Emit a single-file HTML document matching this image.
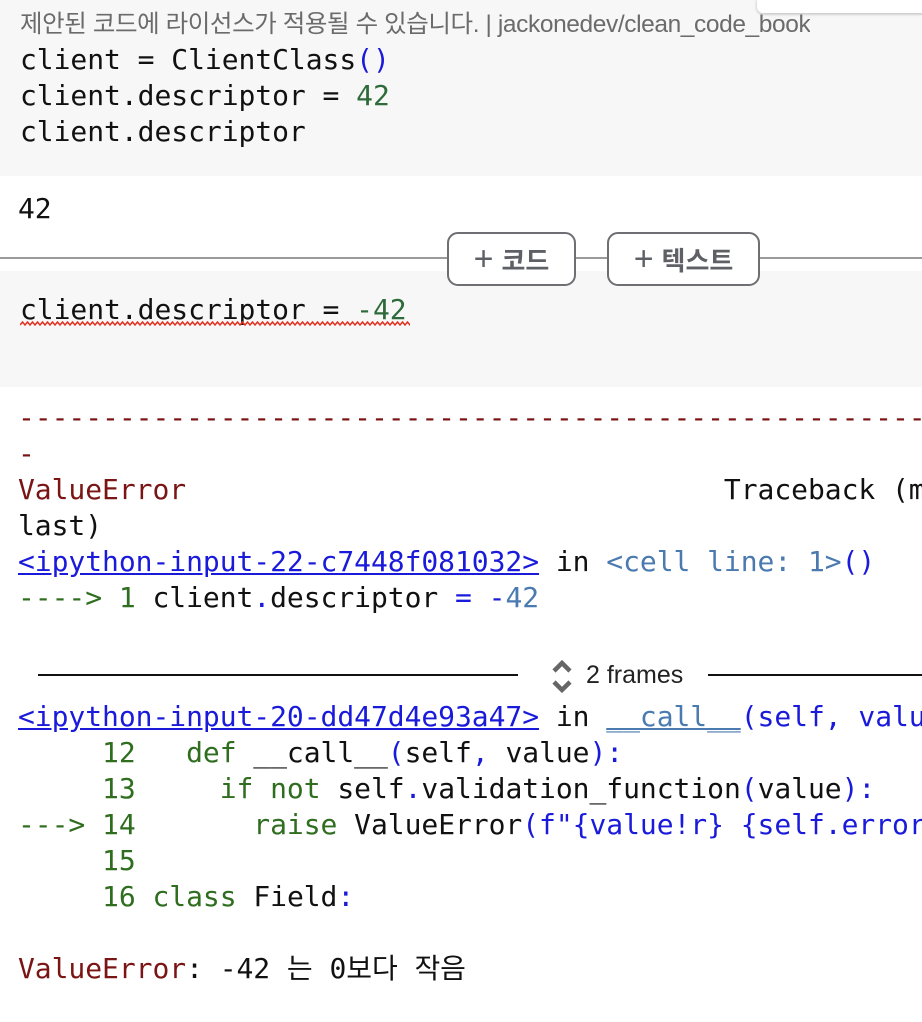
<!DOCTYPE html>
<html><head><meta charset="utf-8"><style>
body{margin:0;width:922px;height:1022px;overflow:hidden;background:#fff;position:relative;font-family:"DejaVu Sans Mono","Liberation Mono","Noto Sans CJK KR",monospace;}
.abs{position:absolute;white-space:pre;font-size:28px;line-height:36px;overflow:hidden;}
.m{font-family:"DejaVu Sans Mono","Noto Sans CJK KR",monospace;letter-spacing:-0.05px;width:904px;}
.r{color:#7b1414}.g{color:#2f6d1f}.b{color:#1a1adb}.lb{color:#4a7ab0}.n{color:#2e6b3a}
a{color:#1a1adb;text-decoration:underline}
.btn{position:absolute;top:232px;height:54px;border:2px solid #6e6e73;border-radius:11px;background:#fff;box-sizing:border-box;font-family:"Liberation Sans","Noto Sans CJK KR",sans-serif;font-size:26px;font-weight:bold;color:#5f6066;display:flex;align-items:center;justify-content:center;}
.btn span{font-weight:normal;font-size:34px;margin-right:8px;line-height:1;}
</style></head><body>
<div style="position:absolute;left:0;top:0;width:922px;height:176px;background:#f7f7f7"></div>
<div style="position:absolute;left:757px;top:-4px;width:180px;height:17px;background:#fff;border-radius:6px;box-shadow:0 1px 3px rgba(0,0,0,.25)"></div>
<div class="abs" style="left:20px;top:10px;font-family:'Liberation Sans','Noto Sans CJK KR',sans-serif;font-size:24.5px;line-height:30px;color:#6b6b6b;letter-spacing:-0.4px">제안된 코드에 라이선스가 적용될 수 있습니다. | jackonedev/clean_code_book</div>
<div class="abs m" style="left:20px;top:42px;color:#111">client = ClientClass<span class="b">()</span>
client.descriptor = <span class="n">42</span>
client.descriptor</div>
<div class="abs m" style="left:18px;top:191px;color:#111">42</div>
<div style="position:absolute;left:0;top:257px;width:922px;height:2px;background:#9a9a9a"></div>
<div style="position:absolute;left:0;top:271px;width:922px;height:116px;background:#f7f7f7"></div>
<div class="btn" style="left:447px;width:129px"><span>+</span>코드</div>
<div class="btn" style="left:607px;width:153px"><span>+</span>텍스트</div>
<div class="abs m" style="left:20px;top:292px;color:#111">client.descriptor = <span class="n">-42</span></div>
<svg style="position:absolute;left:20px;top:320px" width="390" height="8"><path d="M0 5 l2.5 -3 l2.5 3 l2.5 -3 l2.5 3 l2.5 -3 l2.5 3 l2.5 -3 l2.5 3 l2.5 -3 l2.5 3 l2.5 -3 l2.5 3 l2.5 -3 l2.5 3 l2.5 -3 l2.5 3 l2.5 -3 l2.5 3 l2.5 -3 l2.5 3 l2.5 -3 l2.5 3 l2.5 -3 l2.5 3 l2.5 -3 l2.5 3 l2.5 -3 l2.5 3 l2.5 -3 l2.5 3 l2.5 -3 l2.5 3 l2.5 -3 l2.5 3 l2.5 -3 l2.5 3 l2.5 -3 l2.5 3 l2.5 -3 l2.5 3 l2.5 -3 l2.5 3 l2.5 -3 l2.5 3 l2.5 -3 l2.5 3 l2.5 -3 l2.5 3 l2.5 -3 l2.5 3 l2.5 -3 l2.5 3 l2.5 -3 l2.5 3 l2.5 -3 l2.5 3 l2.5 -3 l2.5 3 l2.5 -3 l2.5 3 l2.5 -3 l2.5 3 l2.5 -3 l2.5 3 l2.5 -3 l2.5 3 l2.5 -3 l2.5 3 l2.5 -3 l2.5 3 l2.5 -3 l2.5 3 l2.5 -3 l2.5 3 l2.5 -3 l2.5 3 l2.5 -3 l2.5 3 l2.5 -3 l2.5 3 l2.5 -3 l2.5 3 l2.5 -3 l2.5 3 l2.5 -3 l2.5 3 l2.5 -3 l2.5 3 l2.5 -3 l2.5 3 l2.5 -3 l2.5 3 l2.5 -3 l2.5 3 l2.5 -3 l2.5 3 l2.5 -3 l2.5 3 l2.5 -3 l2.5 3 l2.5 -3 l2.5 3 l2.5 -3 l2.5 3 l2.5 -3 l2.5 3 l2.5 -3 l2.5 3 l2.5 -3 l2.5 3 l2.5 -3 l2.5 3 l2.5 -3 l2.5 3 l2.5 -3 l2.5 3 l2.5 -3 l2.5 3 l2.5 -3 l2.5 3 l2.5 -3 l2.5 3 l2.5 -3 l2.5 3 l2.5 -3 l2.5 3 l2.5 -3 l2.5 3 l2.5 -3 l2.5 3 l2.5 -3 l2.5 3 l2.5 -3 l2.5 3 l2.5 -3 l2.5 3 l2.5 -3 l2.5 3 l2.5 -3 l2.5 3 l2.5 -3 l2.5 3 l2.5 -3 l2.5 3 l2.5 -3 l2.5 3 l2.5 -3 l2.5 3 l2.5 -3 l2.5 3 l2.5 -3 l2.5 3 l2.5 -3 l2.5 3 l2.5 -3 l2.5 3 l2.5 -3 l2.5 3" fill="none" stroke="#e0301e" stroke-width="1.5"/></svg>
<div class="abs m" style="left:18px;top:400px;color:#111"><span class="r">------------------------------------------------------
-
ValueError</span>                                Traceback (most recent call
last)
<a>&lt;ipython-input-22-c7448f081032&gt;</a> in <span class="lb">&lt;cell line: 1&gt;</span><span class="b">()</span>
<span class="g">----&gt; 1</span> client<span class="b">.</span>descriptor <span class="b">=</span> <span class="b">-</span><span class="lb">42</span>

</div>
<div style="position:absolute;left:38px;top:674px;width:480px;height:2px;background:#111"></div>
<div style="position:absolute;left:708px;top:674px;width:214px;height:2px;background:#111"></div>
<svg style="position:absolute;left:549px;top:657px" width="26" height="40"><path d="M5 14 L13 6 L21 14" fill="none" stroke="#666" stroke-width="4.5"/><path d="M5 25 L13 33 L21 25" fill="none" stroke="#666" stroke-width="4.5"/></svg>
<div class="abs" style="left:586px;top:657px;font-family:'Liberation Sans',sans-serif;font-size:25px;color:#222">2 frames</div>
<div class="abs m" style="left:18px;top:699px;color:#111"><a>&lt;ipython-input-20-dd47d4e93a47&gt;</a> in <span class="lb" style="text-decoration:underline">__call__</span><span class="b">(self, value)</span>
<span class="g">     12   def</span> __call__<span class="b">(</span>self<span class="b">,</span> value<span class="b">):</span>
<span class="g">     13     if not</span> self<span class="b">.</span>validation_function<span class="b">(</span>value<span class="b">):</span>
<span class="g">---&gt; 14       raise</span> ValueError<span class="b">(f"{value!r} {self.error_message}")</span>
<span class="g">     15</span>
<span class="g">     16</span> <span class="g">class</span> Field<span class="b">:</span>

<span class="r">ValueError</span>: -42 는 0보다 작음</div>
</body></html>
